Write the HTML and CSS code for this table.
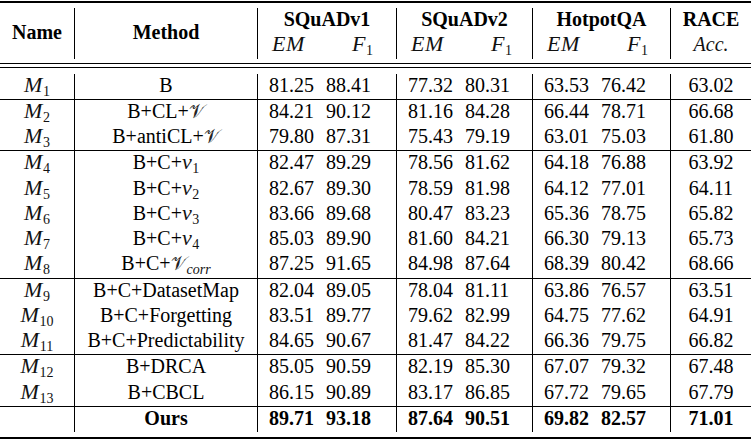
FILE: index.html
```html
<!DOCTYPE html>
<html>
<head>
<meta charset="utf-8">
<link rel="stylesheet" href="styles.css">
</head>
<body>
<div class="booktab">
  <div class="rule-top"></div>
  <table class="grid head">
    <colgroup>
      <col class="w-name"><col class="w-method">
      <col class="w-a"><col class="w-b1">
      <col class="w-a"><col class="w-b2">
      <col class="w-a"><col class="w-b3">
      <col class="w-race">
    </colgroup>
    <tr>
      <th rowspan="2" class="ctr">Name</th>
      <th rowspan="2" class="ctr vl">Method</th>
      <th colspan="2" class="ctr vl">SQuADv1</th>
      <th colspan="2" class="ctr vl">SQuADv2</th>
      <th colspan="2" class="ctr vl">HotpotQA</th>
      <th class="ctr vl">RACE</th>
    </tr>
    <tr>
      <td class="vl hem"><span class="m">EM</span></td>
      <td class="hf1"><span class="m">F<sub>1</sub></span></td>
      <td class="vl hem"><span class="m">EM</span></td>
      <td class="hf1"><span class="m">F<sub>1</sub></span></td>
      <td class="vl hem"><span class="m">EM</span></td>
      <td class="hf1"><span class="m">F<sub>1</sub></span></td>
      <td class="vl ctr"><i class="acc">Acc.</i></td>
    </tr>
  </table>
  <div class="rule-double"></div>
  <table class="grid body">
    <colgroup>
      <col class="w-name"><col class="w-method">
      <col class="w-a"><col class="w-b1">
      <col class="w-a"><col class="w-b2">
      <col class="w-a"><col class="w-b3">
      <col class="w-race">
    </colgroup>
    <tr>
      <td class="ctr"><span class="m">M<sub>1</sub></span></td><td class="ctr vl">B</td>
      <td class="vl a">81.25</td><td class="b">88.41</td><td class="vl a">77.32</td><td class="b">80.31</td><td class="vl a">63.53</td><td class="b">76.42</td><td class="vl ctr">63.02</td>
    </tr>
    <tr class="sep">
      <td class="ctr"><span class="m">M<sub>2</sub></span></td><td class="ctr vl">B+CL+<span class="cal">𝒱</span></td>
      <td class="vl a">84.21</td><td class="b">90.12</td><td class="vl a">81.16</td><td class="b">84.28</td><td class="vl a">66.44</td><td class="b">78.71</td><td class="vl ctr">66.68</td>
    </tr>
    <tr>
      <td class="ctr"><span class="m">M<sub>3</sub></span></td><td class="ctr vl">B+antiCL+<span class="cal">𝒱</span></td>
      <td class="vl a">79.80</td><td class="b">87.31</td><td class="vl a">75.43</td><td class="b">79.19</td><td class="vl a">63.01</td><td class="b">75.03</td><td class="vl ctr">61.80</td>
    </tr>
    <tr class="sep">
      <td class="ctr"><span class="m">M<sub>4</sub></span></td><td class="ctr vl">B+C+<span class="m">v<sub>1</sub></span></td>
      <td class="vl a">82.47</td><td class="b">89.29</td><td class="vl a">78.56</td><td class="b">81.62</td><td class="vl a">64.18</td><td class="b">76.88</td><td class="vl ctr">63.92</td>
    </tr>
    <tr>
      <td class="ctr"><span class="m">M<sub>5</sub></span></td><td class="ctr vl">B+C+<span class="m">v<sub>2</sub></span></td>
      <td class="vl a">82.67</td><td class="b">89.30</td><td class="vl a">78.59</td><td class="b">81.98</td><td class="vl a">64.12</td><td class="b">77.01</td><td class="vl ctr">64.11</td>
    </tr>
    <tr>
      <td class="ctr"><span class="m">M<sub>6</sub></span></td><td class="ctr vl">B+C+<span class="m">v<sub>3</sub></span></td>
      <td class="vl a">83.66</td><td class="b">89.68</td><td class="vl a">80.47</td><td class="b">83.23</td><td class="vl a">65.36</td><td class="b">78.75</td><td class="vl ctr">65.82</td>
    </tr>
    <tr>
      <td class="ctr"><span class="m">M<sub>7</sub></span></td><td class="ctr vl">B+C+<span class="m">v<sub>4</sub></span></td>
      <td class="vl a">85.03</td><td class="b">89.90</td><td class="vl a">81.60</td><td class="b">84.21</td><td class="vl a">66.30</td><td class="b">79.13</td><td class="vl ctr">65.73</td>
    </tr>
    <tr>
      <td class="ctr"><span class="m">M<sub>8</sub></span></td><td class="ctr vl">B+C+<span class="cal">𝒱</span><span class="m"><sub class="it">corr</sub></span></td>
      <td class="vl a">87.25</td><td class="b">91.65</td><td class="vl a">84.98</td><td class="b">87.64</td><td class="vl a">68.39</td><td class="b">80.42</td><td class="vl ctr">68.66</td>
    </tr>
    <tr class="sep">
      <td class="ctr"><span class="m">M<sub>9</sub></span></td><td class="ctr vl">B+C+DatasetMap</td>
      <td class="vl a">82.04</td><td class="b">89.05</td><td class="vl a">78.04</td><td class="b">81.11</td><td class="vl a">63.86</td><td class="b">76.57</td><td class="vl ctr">63.51</td>
    </tr>
    <tr>
      <td class="ctr"><span class="m">M<sub>10</sub></span></td><td class="ctr vl">B+C+Forgetting</td>
      <td class="vl a">83.51</td><td class="b">89.77</td><td class="vl a">79.62</td><td class="b">82.99</td><td class="vl a">64.75</td><td class="b">77.62</td><td class="vl ctr">64.91</td>
    </tr>
    <tr>
      <td class="ctr"><span class="m">M<sub>11</sub></span></td><td class="ctr vl">B+C+Predictability</td>
      <td class="vl a">84.65</td><td class="b">90.67</td><td class="vl a">81.47</td><td class="b">84.22</td><td class="vl a">66.36</td><td class="b">79.75</td><td class="vl ctr">66.82</td>
    </tr>
    <tr class="sep">
      <td class="ctr"><span class="m">M<sub>12</sub></span></td><td class="ctr vl">B+DRCA</td>
      <td class="vl a">85.05</td><td class="b">90.59</td><td class="vl a">82.19</td><td class="b">85.30</td><td class="vl a">67.07</td><td class="b">79.32</td><td class="vl ctr">67.48</td>
    </tr>
    <tr>
      <td class="ctr"><span class="m">M<sub>13</sub></span></td><td class="ctr vl">B+CBCL</td>
      <td class="vl a">86.15</td><td class="b">90.89</td><td class="vl a">83.17</td><td class="b">86.85</td><td class="vl a">67.72</td><td class="b">79.65</td><td class="vl ctr">67.79</td>
    </tr>
    <tr class="sep best">
      <td class="ctr"></td><td class="ctr vl">Ours</td>
      <td class="vl a">89.71</td><td class="b">93.18</td><td class="vl a">87.64</td><td class="b">90.51</td><td class="vl a">69.82</td><td class="b">82.57</td><td class="vl ctr">71.01</td>
    </tr>
  </table>
  <div class="rule-bottom"></div>
</div>
</body>
</html>
```

FILE: styles.css
```css
html, body {
  margin: 0;
  padding: 0;
  background: #fff;
}
.booktab {
  width: 751px;
  padding-top: 1px;
  font-family: "Liberation Serif", "Times New Roman", serif;
  font-size: 20px;
  color: #000;
}
.rule-top, .rule-bottom {
  height: 2px;
  background: #000;
}
.rule-double {
  height: 3px;
  border-top: 1px solid #000;
  border-bottom: 1px solid #000;
}
.grid {
  width: 751px;
  table-layout: fixed;
  border-collapse: separate;
  border-spacing: 0;
}
.grid.head { margin: 5px 0 4px; }
.grid.body { margin: 6px 0 5px; }
.w-name { width: 74px; }
.w-method { width: 183px; }
.w-a { width: 57px; }
.w-b1 { width: 82px; }
.w-b2 { width: 79px; }
.w-b3 { width: 81px; }
.w-race { width: 81px; }
.grid th, .grid td {
  font-family: "Liberation Serif", "Times New Roman", serif;
  font-size: 20px;
  padding: 0 0 3px 0;
  line-height: 22.25px;
  white-space: nowrap;
  font-weight: normal;
  text-align: left;
  vertical-align: middle;
}
.grid th { font-weight: bold; }
.ctr { text-align: center !important; }
.vl { border-left: 1px solid #000; }
.sep td { border-top: 1px solid #000; }
.a { padding-left: 11px !important; }
.b { padding-left: 12px !important; }
.hem { padding-left: 14px !important; }
.hf1 { padding-left: 38px !important; }
.best td { font-weight: bold; }
.m {
  font-style: italic;
  font-size: 22px;
  line-height: 0;
  letter-spacing: 0.5px;
  color: #111;
}
.m sub {
  font-style: normal;
  font-size: 14px;
  line-height: 0;
  vertical-align: -4px;
  letter-spacing: 0;
}
.m sub.it { font-style: italic; }
.acc { color: #111; }
.cal {
  font-family: "DejaVu Sans", "DejaVu Serif", serif;
  font-size: 19px;
  line-height: 0;
  color: #222;
}
```
